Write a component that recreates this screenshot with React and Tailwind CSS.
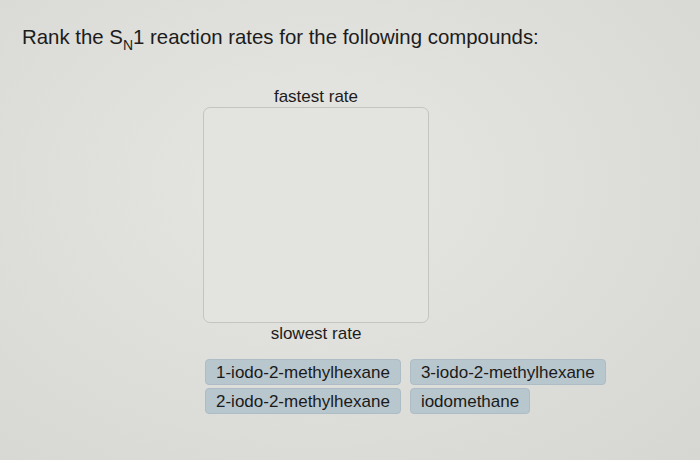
export default function App() {
  const chips = [
    "1-iodo-2-methylhexane",
    "3-iodo-2-methylhexane",
    "2-iodo-2-methylhexane",
    "iodomethane",
  ];
  return (
    <div
      className="w-[700px] h-[460px] overflow-hidden bg-[radial-gradient(ellipse_at_45%_40%,#e6e6e2_0%,#dfdfdb_45%,#d6d6d2_100%)] text-[#1c1c1c]"
      style={{ fontFamily: '"Liberation Sans", Arial, sans-serif' }}
    >
      <div className="pl-[22px] pt-[25px] text-[20.4px] leading-[24px]">
        Rank the S<sub className="text-[14px] align-[-2px]">N</sub>1 reaction rates for the following compounds:
      </div>
      <div className="ml-[203px] mt-[38px] w-[226px] flex flex-col items-center">
        <div className="text-[17px] leading-[19px] h-[20px]">fastest rate</div>
        <div className="w-[226px] h-[216px] rounded-[7px] border border-[#c4c4c0] bg-[#e3e3df]" />
        <div className="mt-[1px] text-[17px] leading-[19px]">slowest rate</div>
      </div>
      <div className="ml-[205px] mt-[16px] w-[440px] flex flex-wrap gap-x-[9px] gap-y-[3px]">
        {chips.map((c) => (
          <div
            key={c}
            className="h-[26px] px-[10px] flex items-center rounded-[4px] bg-[#b8c6ce] border border-[#adbcc5] text-[17px] leading-none text-[#1a1a1a]"
          >
            {c}
          </div>
        ))}
      </div>
    </div>
  );
}
